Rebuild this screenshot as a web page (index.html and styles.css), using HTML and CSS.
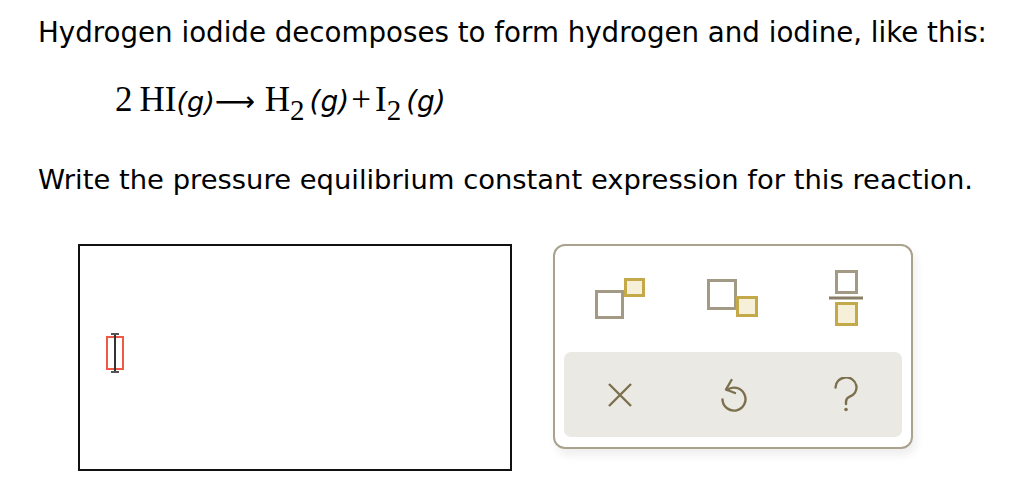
FILE: index.html
```html
<!DOCTYPE html>
<html>
<head>
<meta charset="utf-8">
<link rel="stylesheet" href="styles.css">
</head>
<body>
<div class="page">
  <p class="para">Hydrogen iodide decomposes to form hydrogen and iodine, like this:</p>
  <div class="eq">
    <span class="rm">2&#8201;HI</span><span class="it">(g)</span><span class="arrow">&#10230;</span><span class="rm sp">H</span><sub class="sub">2</sub><span class="it ga">(g)</span><span class="rm plus">+</span><span class="rm">I</span><sub class="sub">2</sub><span class="it ga">(g)</span>
  </div>
  <p class="para para2">Write the pressure equilibrium constant expression for this reaction.</p>
  <div class="work">
    <div class="answer">
      <div class="cursor"><span class="beam"></span></div>
    </div>
    <div class="palette">
      <div class="row top">
        <button class="btn" aria-label="superscript">
          <svg width="52" height="42" viewBox="0 0 52 42">
            <rect x="2.5" y="13.5" width="26" height="26" fill="#fff" stroke="#a39a86" stroke-width="3"/>
            <rect x="31.5" y="1.5" width="18" height="16" fill="#f6f0d8" stroke="#c3a94a" stroke-width="3"/>
          </svg>
        </button>
        <button class="btn" aria-label="subscript">
          <svg width="52" height="40" viewBox="0 0 52 40">
            <rect x="1.5" y="1.5" width="27" height="28" fill="#fff" stroke="#a39a86" stroke-width="3"/>
            <rect x="30.5" y="18.5" width="19" height="18" fill="#f6f0d8" stroke="#c3a94a" stroke-width="3"/>
          </svg>
        </button>
        <button class="btn" aria-label="fraction">
          <svg width="36" height="58" viewBox="0 0 36 58">
            <rect x="8.5" y="1.5" width="20" height="21" fill="#fff" stroke="#a39a86" stroke-width="3"/>
            <line x1="1" y1="28" x2="35" y2="28" stroke="#8a7f66" stroke-width="3"/>
            <rect x="8.5" y="33.5" width="20" height="21" fill="#f6f0d8" stroke="#c3a94a" stroke-width="3"/>
          </svg>
        </button>
      </div>
      <div class="row bottom">
        <button class="btn" aria-label="clear">
          <svg width="26" height="26" viewBox="0 0 26 26">
            <path d="M2 2 L24 24 M24 2 L2 24" stroke="#7c6f4e" stroke-width="2.4" fill="none"/>
          </svg>
        </button>
        <button class="btn" aria-label="undo">
          <svg width="30" height="36" viewBox="0 0 30 36">
            <path d="M9 13 A11.5 11.5 0 1 1 4.5 22.5" stroke="#7c6f4e" stroke-width="2.4" fill="none" stroke-linecap="round"/>
            <path d="M13.5 3 L8 12.5 L17 16" stroke="#7c6f4e" stroke-width="2.4" fill="none" stroke-linecap="round" stroke-linejoin="round"/>
          </svg>
        </button>
        <button class="btn" aria-label="help">
          <svg width="26" height="36" viewBox="0 0 26 36">
            <path d="M2.5 10.5 A10.5 10 0 1 1 16 20 Q13 21.5 13 25 L13 27" stroke="#7c6f4e" stroke-width="2.4" fill="none" stroke-linecap="round"/>
            <circle cx="13" cy="32.5" r="1.8" fill="#7c6f4e"/>
          </svg>
        </button>
      </div>
    </div>
  </div>
</div>
</body>
</html>
```
FILE: styles.css
```css
html, body {
  margin: 0;
  padding: 0;
  background: #fff;
}
.page {
  padding: 17px 0 0 38px;
  font-family: "DejaVu Sans", Verdana, sans-serif;
  color: #000;
}
.para {
  margin: 0;
  font-size: 27.7px;
  line-height: 32px;
  white-space: nowrap;
}
.para2 {
  margin-top: 44px;
  font-size: 27.4px;
}
.eq {
  margin: 31px 0 0 77px;
  height: 40px;
  line-height: 40px;
  white-space: nowrap;
}
.rm {
  font-family: "Liberation Serif", "Times New Roman", serif;
  font-size: 35px;
}
.it {
  font-family: "DejaVu Sans", Verdana, sans-serif;
  font-style: italic;
  font-size: 27px;
}
.ga {
  margin-left: 5px;
  font-size: 28px;
}
.plus {
  margin: 0 4px 0 2px;
}
.arrow {
  font-family: "DejaVu Sans", sans-serif;
  font-size: 28px;
}
.sp {
  margin-left: 10px;
}
.sub {
  font-family: "Liberation Serif", serif;
  font-size: 29px;
  vertical-align: -9px;
  line-height: 0;
}
.work {
  display: flex;
  align-items: flex-start;
  gap: 41px;
  margin: 48px 0 0 40px;
}
.answer {
  box-sizing: border-box;
  width: 434px;
  height: 227px;
  border: 2px solid #111;
  display: flex;
  align-items: center;
  padding: 0 0 10px 26px;
}
.cursor {
  position: relative;
  box-sizing: border-box;
  width: 18px;
  height: 34px;
  border: 2px solid #ee5a45;
}
.beam {
  position: absolute;
  top: -5px;
  bottom: -5px;
  left: 50%;
  width: 2px;
  margin-left: -1px;
  background: #333;
}
.beam::before,
.beam::after {
  content: "";
  position: absolute;
  left: -3px;
  width: 8px;
  height: 2px;
  background: #555;
}
.beam::before {
  top: 0;
}
.beam::after {
  bottom: 0;
}
.palette {
  box-sizing: border-box;
  width: 360px;
  height: 205px;
  border: 2px solid #aaa28e;
  border-radius: 12px;
  padding: 0 9px 10px 9px;
  display: flex;
  flex-direction: column;
  box-shadow: 3px 6px 10px rgba(0,0,0,0.07);
}
.row {
  display: grid;
  grid-template-columns: 1fr 1fr 1fr;
}
.top {
  flex: 1;
}
.bottom {
  height: 85px;
  background: #ebe9e4;
  border-radius: 7px;
}
.btn {
  border: none;
  background: transparent;
  padding: 0;
  margin: 0;
  display: flex;
  align-items: center;
  justify-content: center;
}
.btn svg {
  display: block;
}
```
